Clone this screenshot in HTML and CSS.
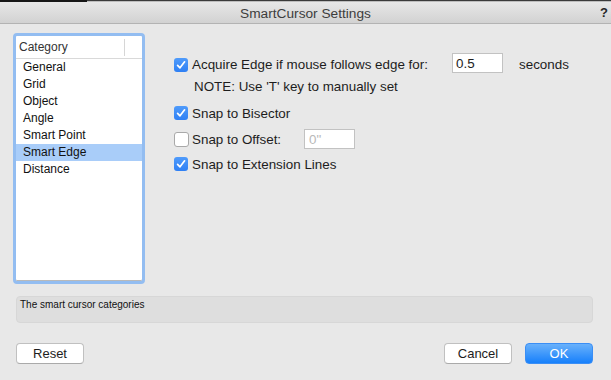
FILE: index.html
```html
<!DOCTYPE html>
<html>
<head>
<meta charset="utf-8">
<link rel="stylesheet" href="styles.css">
</head>
<body>
<div class="topstrip"><div class="topblack"></div><div class="topline"></div></div>
<div class="titlebar">
  <span class="title">SmartCursor Settings</span>
  <span class="help">?</span>
</div>
<div class="content">
  <div class="main">
    <div class="listbox">
      <div class="listhead"><span>Category</span><i class="colsep"></i></div>
      <div class="row">General</div>
      <div class="row">Grid</div>
      <div class="row">Object</div>
      <div class="row">Angle</div>
      <div class="row">Smart Point</div>
      <div class="row selected">Smart Edge</div>
      <div class="row">Distance</div>
    </div>
    <div class="panel">
      <div class="line line1">
        <span class="cb on"><svg width="14" height="14" viewBox="0 0 14 14"><path d="M3.6 7.3 L6 9.8 L10.6 3.8" fill="none" stroke="#fff" stroke-width="1.7" stroke-linecap="round" stroke-linejoin="round"/></svg></span>
        <span class="lbl w260">Acquire Edge if mouse follows edge for:</span>
        <span class="field w51">0.5</span>
        <span class="unit">seconds</span>
      </div>
      <div class="note">NOTE: Use 'T' key to manually set</div>
      <div class="line line3">
        <span class="cb on"><svg width="14" height="14" viewBox="0 0 14 14"><path d="M3.6 7.3 L6 9.8 L10.6 3.8" fill="none" stroke="#fff" stroke-width="1.7" stroke-linecap="round" stroke-linejoin="round"/></svg></span>
        <span class="lbl">Snap to Bisector</span>
      </div>
      <div class="line line4">
        <span class="cb off"></span>
        <span class="lbl w112">Snap to Offset:</span>
        <span class="field w51 ph">0"</span>
      </div>
      <div class="line line5">
        <span class="cb on"><svg width="14" height="14" viewBox="0 0 14 14"><path d="M3.6 7.3 L6 9.8 L10.6 3.8" fill="none" stroke="#fff" stroke-width="1.7" stroke-linecap="round" stroke-linejoin="round"/></svg></span>
        <span class="lbl">Snap to Extension Lines</span>
      </div>
    </div>
  </div>
  <div class="desc">The smart cursor categories</div>
  <div class="buttons">
    <button class="btn">Reset</button>
    <span class="spacer"></span>
    <button class="btn">Cancel</button>
    <button class="btn primary">OK</button>
  </div>
</div>
</body>
</html>
```
FILE: styles.css
```css
* { box-sizing: border-box; }
html, body { margin: 0; padding: 0; }
body {
  width: 611px;
  height: 380px;
  overflow: hidden;
  background: #e8e8e8;
  font-family: "Liberation Sans", Arial, sans-serif;
  color: #1d1d1d;
}
.topstrip {
  height: 2px;
  display: flex;
  background: #bdbdbd;
}
.topblack { width: 87px; height: 2px; background: #161616; }
.topline { flex: 1; height: 1px; background: #3a3a3a; }
.titlebar {
  height: 22px;
  background: linear-gradient(#e7e7e7, #d2d2d2);
  border-bottom: 1px solid #b3b3b3;
  display: flex;
  align-items: center;
  justify-content: center;
  position: relative;
}
.title {
  font-size: 13.7px;
  color: #3d3d3d;
  padding-top: 1px;
}
.help {
  position: absolute;
  right: 3px;
  top: 3px;
  font-size: 13px;
  font-weight: bold;
  color: #262626;
}
.content {
  padding: 9px 0 0 13px;
}
.main {
  display: flex;
}
.listbox {
  width: 132px;
  height: 251px;
  border: 3px solid #93bdf1;
  border-radius: 4px;
  background: #fff;
  box-shadow: inset 0 -1px 0 #b9b9b9;
}
.listhead {
  height: 23px;
  border-bottom: 1px solid #d9d9d9;
  display: flex;
  align-items: center;
  padding-left: 3px;
  font-size: 12px;
  color: #333;
  position: relative;
}
.colsep {
  position: absolute;
  left: 108px;
  top: 3px;
  width: 1px;
  height: 17px;
  background: #d6d6d6;
}
.row {
  height: 17px;
  line-height: 17px;
  font-size: 12px;
  padding-left: 7px;
  color: #111;
}
.row.selected { background: #a9cdf9; }
.panel {
  margin-left: 29px;
  padding-top: 20px;
  font-size: 13.4px;
}
.line {
  display: flex;
  align-items: center;
}
.line1 { height: 20px; }
.line3 { height: 16px; margin-top: 10px; }
.line4 { height: 20px; margin-top: 8px; }
.line5 { height: 16px; margin-top: 7px; }
.cb {
  width: 14px;
  height: 14px;
  border-radius: 3px;
  flex: none;
  margin-right: 4px;
  display: block;
}
.cb svg { display: block; }
.line1 .cb { margin-top: 3px; }
.cb.on {
  background: linear-gradient(#4f9bfb, #2f80f4);
  border: none;
}
.cb.off {
  background: #fff;
  border: 1px solid #a9a9a9;
  width: 15px;
  height: 15px;
  margin-right: 3px;
}
.lbl { white-space: nowrap; padding-top: 1px; }
.line1 .lbl { padding-top: 2px; }
.w260 { width: 260px; }
.w112 { width: 112px; }
.field {
  height: 20px;
  background: #fff;
  border: 1px solid #c2c2c2;
  padding: 2px 0 0 3px;
  font-size: 13.4px;
  line-height: 16px;
}
.w51 { width: 51px; }
.field.ph { color: #b9b9b9; padding-left: 4px; }
.unit { margin-left: 16px; padding-top: 2px; }
.note {
  margin-top: 6px;
  height: 16px;
  line-height: 16px;
  padding-left: 20px;
}
.desc {
  margin: 12px 0 0 3px;
  width: 577px;
  height: 27px;
  background: #dedede;
  border: 1px solid #d7d7d7;
  border-radius: 4px;
  font-size: 10px;
  line-height: 12px;
  padding: 2px 0 0 3px;
  color: #111;
}
.buttons {
  display: flex;
  margin: 20px 0 0 3px;
  width: 577px;
  gap: 13px;
}
.spacer { flex: 1; }
.btn {
  width: 68px;
  height: 21px;
  font-family: "Liberation Sans", Arial, sans-serif;
  font-size: 13px;
  color: #1d1d1d;
  background: #fff;
  border: 1px solid #c0c0c0;
  border-bottom-color: #aaa;
  border-radius: 4px;
  padding: 0;
  line-height: 19px;
}
.btn.primary {
  background: linear-gradient(#69b1fb, #1780fb);
  border: 1px solid #3a8ef5;
  color: #fff;
}
```
